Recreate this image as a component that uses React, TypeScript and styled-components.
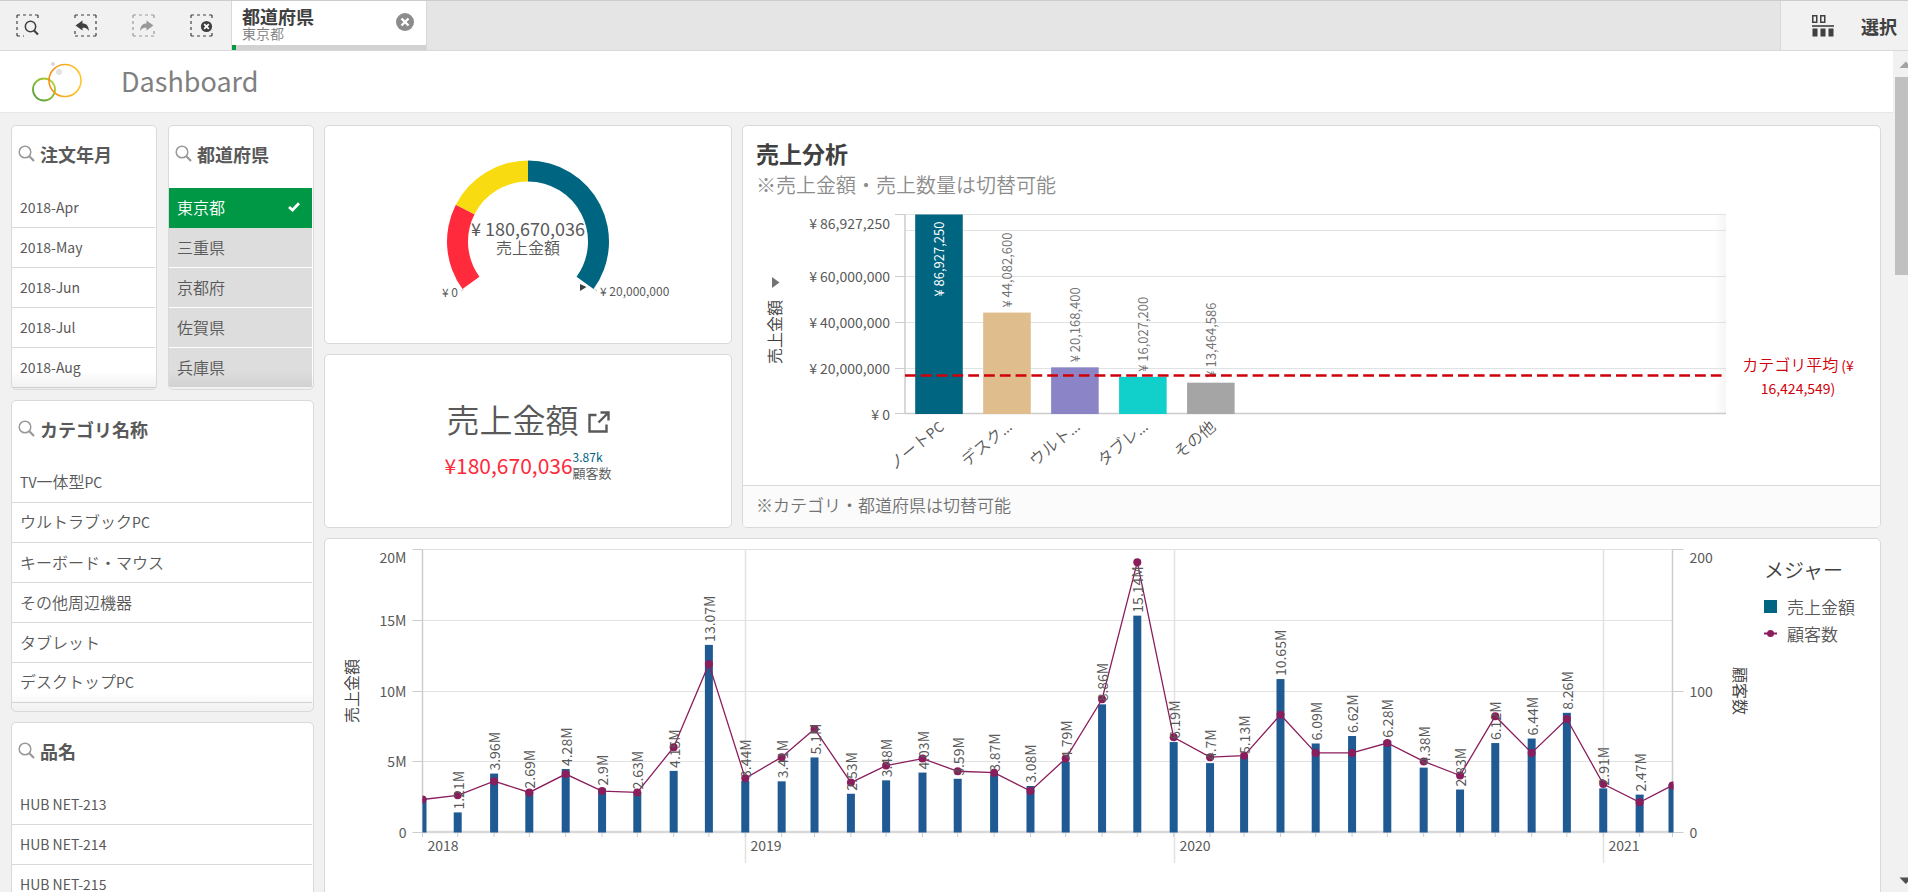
import React, { useLayoutEffect, useRef, useState } from "react";
import styled, { createGlobalStyle, css } from "styled-components";

/* ---------- theme values ---------- */

const color = {
  page: "#f1f1f1",
  bar: "#e5e5e5",
  border: "#d9d9d9",
  text: "#595959",
  strong: "#404040",
  muted: "#808080",
  teal: "#006580",
  red: "#ff2a3b",
  yellow: "#f8db10",
  green: "#009845",
  blue: "#205a92",
  plum: "#8a1e5c",
  ref: "#d0000a",
};

/* Japanese text is set one step lighter than Latin text. */
const weight = { japanese: 350, latin: 400, bold: 700 };

const GlobalStyle = createGlobalStyle`
  *, *::before, *::after { box-sizing: border-box; }
  body {
    margin: 0;
    background: ${color.page};
    color: ${color.text};
    font-family: "Noto Sans CJK JP", sans-serif;
    font-size: 16px;
    font-weight: ${weight.japanese};
  }
  button { font: inherit; color: inherit; background: none; border: 0; padding: 0; cursor: pointer; }
  svg { display: block; }
  h1, h2, p, ul { margin: 0; padding: 0; }
`;

/* ---------- mixed Japanese / Latin text ---------- */

const Latin = styled.span<{ $size: number }>`
  font-size: ${(p) => p.$size}px;
  font-weight: ${weight.latin};
`;

const splitScripts = (text: string) => text.match(/[\x00-\xff]+|[^\x00-\xff]+/g) ?? [];
const isLatin = (part: string) => /^[\x00-\xff]/.test(part);

function Mixed({ text, latin }: { text: string; latin: number }) {
  return (
    <span>
      {splitScripts(text).map((part, i) =>
        isLatin(part) ? (
          <Latin key={i} $size={latin}>
            {part}
          </Latin>
        ) : (
          part
        )
      )}
    </span>
  );
}

function MixedTspans({ text, latin }: { text: string; latin: number }) {
  return (
    <>
      {splitScripts(text).map((part, i) =>
        isLatin(part) ? (
          <tspan key={i} fontSize={latin} fontWeight={weight.latin}>
            {part}
          </tspan>
        ) : (
          <tspan key={i}>{part}</tspan>
        )
      )}
    </>
  );
}

/* ---------- selection bar ---------- */

const Page = styled.div`
  display: flex;
  flex-direction: column;
  height: 100vh;
  overflow: hidden;
`;

const SelectionBar = styled.nav`
  display: flex;
  flex: none;
  height: 51px;
  background: ${color.bar};
  border-top: 1px solid #ccc;
  border-bottom: 1px solid ${color.border};
`;

const ToolGroup = styled.div`
  display: flex;
  width: 232px;
  background: ${color.page};
  border-right: 1px solid ${color.border};
`;

const ToolButton = styled.button`
  display: flex;
  align-items: center;
  justify-content: center;
  flex: 1;
  height: 49px;
  padding-right: 1px;
  color: ${color.strong};
  &:disabled {
    color: #999;
    cursor: default;
  }
`;

const SelectionTab = styled.div`
  display: flex;
  flex-direction: column;
  width: 195px;
  background: #fff;
  border-right: 1px solid ${color.border};
`;

const TabBody = styled.div`
  display: flex;
  justify-content: space-between;
  flex: 1;
  padding: 5px 12px 0 10px;
`;

const TabTitle = styled.div`
  font-size: 18px;
  font-weight: ${weight.bold};
  line-height: 20px;
  color: ${color.strong};
`;

const TabValue = styled.div`
  font-size: 14px;
  line-height: 14px;
  color: ${color.muted};
`;

const TabClear = styled.button`
  align-self: flex-start;
  padding-top: 7px;
`;

const TabState = styled.div`
  height: 5px;
  background: linear-gradient(to right, ${color.green} 4px, #d2d2d2 4px);
`;

const SelectionTools = styled.div`
  display: flex;
  align-items: center;
  margin-left: auto;
  background: ${color.page};
  border-left: 1px solid ${color.border};
  padding: 0 11px 0 31px;
`;

const SelectionsButton = styled.button`
  display: flex;
  align-items: center;
  gap: 27px;
  font-size: 18px;
  font-weight: ${weight.bold};
  color: ${color.strong};
`;

const DASHED_BOX = "M1 1H22M1 22H22M1 1V22M22 1V22";

function SmartSearchIcon() {
  return (
    <svg width="24" height="24" viewBox="0 0 24 24" fill="none" stroke="currentColor">
      <path d="M1 1H22M1 22H8M1 1V22M22 1V7" strokeDasharray="3 3" strokeWidth="1.2" />
      <circle cx="14.5" cy="12.5" r="5.2" strokeWidth="1.5" />
      <path d="M18 16.5L22 20.5" strokeWidth="2.2" />
    </svg>
  );
}

function StepIcon({ forward }: { forward?: boolean }) {
  return (
    <svg width="24" height="24" viewBox="0 0 24 24" fill="none" stroke="currentColor">
      <g transform={forward ? "matrix(-1 0 0 1 23 0)" : undefined}>
        <path d="M1 1H22M1 22H22M1 1V5M1 17V22M22 1V22" strokeDasharray="3 3" strokeWidth="1.2" />
        <path
          d="M1.5 11.5L8.5 6.5V9.5C12.500 9.500 14.800 12 14.800 17C13 14.200 11.500 13.700 8.500 13.700V16.500Z"
          fill="currentColor"
          stroke="none"
        />
      </g>
    </svg>
  );
}

function ClearAllIcon() {
  return (
    <svg width="24" height="24" viewBox="0 0 24 24" fill="none" stroke="currentColor">
      <path d="M1 1H22M1 22H22M1 1V22M22 1V7M22 19V22" strokeDasharray="3 3" strokeWidth="1.2" />
      <circle cx="16.500" cy="12.500" r="5.600" fill="currentColor" stroke="none" />
      <path d="M14.200 10.200L18.800 14.800M18.800 10.200L14.200 14.800" stroke="#fff" strokeWidth="1.700" />
    </svg>
  );
}

function CloseIcon() {
  return (
    <svg width="18" height="18" viewBox="0 0 18 18">
      <circle cx="9" cy="9" r="9" fill="#8c8c8c" />
      <path d="M5.500 5.500L12.500 12.500M12.500 5.500L5.500 12.500" stroke="#fff" strokeWidth="2.400" />
    </svg>
  );
}

function SelectionsIcon() {
  return (
    <svg width="22" height="22" viewBox="0 0 22 22" fill="none" stroke={color.strong}>
      <path d="M0.750 0.750H4.750V7.250H0.750ZM8.750 0.750H12.750V7.250H8.750Z" strokeWidth="1.500" />
      <path d="M0 11H22" strokeWidth="1.600" />
      <path
        d="M0.500 13.500H5.500V21.500H0.500ZM8.500 13.500H13.500V21.500H8.500ZM16.500 13.500H21.500V21.500H16.500Z"
        fill={color.strong}
        stroke="none"
      />
    </svg>
  );
}

/* ---------- sheet header ---------- */

const Body = styled.div`
  display: flex;
  flex: 1;
  min-height: 0;
`;

const SheetArea = styled.div`
  flex: 1;
  min-width: 0;
  overflow: hidden;
`;

const SheetHeader = styled.header`
  display: flex;
  align-items: center;
  gap: 37px;
  height: 62px;
  padding-left: 30px;
  background: #fff;
  border-bottom: 1px solid #e6e6e6;
`;

const SheetTitle = styled.h1`
  padding-bottom: 2px;
  font-size: 27px;
  font-weight: ${weight.latin};
  line-height: 40px;
  color: #808080;
`;

function Logo() {
  return (
    <svg width="54" height="44" viewBox="0 0 54 44" fill="none">
      <defs>
        <linearGradient id="orange" x1="0" y1="0" x2="1" y2="0">
          <stop offset="0" stopColor="#f39019" />
          <stop offset="1" stopColor="#ffc629" />
        </linearGradient>
        <linearGradient id="lime" x1="0" y1="1" x2="1" y2="0">
          <stop offset="0" stopColor="#4b9a3a" />
          <stop offset="1" stopColor="#c3d62e" />
        </linearGradient>
      </defs>
      <circle cx="23" cy="4" r="2" fill="#d9d9d9" />
      <circle cx="29" cy="12" r="3" fill="#e2e2e2" />
      <circle cx="14" cy="29.500" r="11" stroke="url(#lime)" strokeWidth="1.800" />
      <circle cx="35" cy="20.500" r="16" stroke="url(#orange)" strokeWidth="1.600" />
    </svg>
  );
}

/* ---------- scroll bar ---------- */

const ScrollTrack = styled.div`
  display: flex;
  flex-direction: column;
  flex: none;
  width: 15px;
  padding-left: 2px;
  overflow: hidden;
`;

const ScrollThumb = styled.div`
  height: 198px;
  margin-bottom: auto;
  background: #c0c0c0;
`;

function ScrollArrow({ down }: { down?: boolean }) {
  return (
    <svg width="17" height="26" viewBox="0 0 17 26">
      <path d={down ? "M4.500 11.500H17L10.800 18Z" : "M4.500 17H17L10.800 10.500Z"} fill={down ? "#505050" : "#a3a3a3"} />
    </svg>
  );
}

/* ---------- cards ---------- */

const Sheet = styled.main`
  display: grid;
  grid-template-columns: 303fr 1557fr;
  gap: 10px;
  padding: 12px 12px 0 11px;
`;

const Column = styled.div`
  display: flex;
  flex-direction: column;
  gap: 10px;
  min-width: 0;
`;

const FilterPair = styled.div`
  display: grid;
  grid-template-columns: 1fr 1fr;
  gap: 11px;
`;

const TopRow = styled.div`
  display: grid;
  grid-template-columns: 408fr 1139fr;
  gap: 10px;
`;

const Card = styled.section`
  position: relative;
  display: flex;
  flex-direction: column;
  min-width: 0;
  background: #fff;
  border: 1px solid ${color.border};
  border-radius: 5px;
  overflow: hidden;
`;

/* ---------- filter panes ---------- */

const FilterCard = styled(Card)<{ $height: number }>`
  height: ${(p) => p.$height}px;
  &::after {
    content: "";
    position: absolute;
    inset: auto 0 0 0;
    height: 18px;
    background: linear-gradient(to bottom, transparent, rgba(0, 0, 0, 0.06));
    pointer-events: none;
  }
`;

const FilterHeader = styled.div`
  display: flex;
  align-items: center;
  gap: 5px;
  flex: none;
  height: 62px;
  padding: 0 6px 7px;
`;

const FilterTitle = styled.h2`
  font-size: 18px;
  font-weight: ${weight.bold};
  line-height: 24px;
`;

const FilterList = styled.ul`
  padding-right: 1px;
  list-style: none;
`;

type RowState = "selected" | "excluded" | "optional";

const rowLook = {
  selected: css`
    background: ${color.green};
    border-color: ${color.green};
    color: #fff;
  `,
  excluded: css`
    background: #ddd;
    border-color: #fff;
  `,
  optional: css`
    border-color: ${color.border};
  `,
};

const FilterRow = styled.button<{ $state: RowState }>`
  display: flex;
  align-items: center;
  justify-content: space-between;
  width: 100%;
  height: 40px;
  padding: 0 12px 2px 8px;
  border-bottom: 1px solid;
  font-size: 16px;
  line-height: 24px;
  text-align: left;
  ${(p) => rowLook[p.$state]}
`;

function SearchIcon() {
  return (
    <svg width="17" height="17" viewBox="0 0 17 17" fill="none" stroke="#999">
      <circle cx="7" cy="7" r="5.800" strokeWidth="1.500" />
      <path d="M11.300 11.300L16 16" strokeWidth="2.200" />
    </svg>
  );
}

function CheckIcon() {
  return (
    <svg width="12" height="10" viewBox="0 0 12 10" fill="none" stroke="#fff" strokeWidth="2.800">
      <path d="M1 5L4.500 8L11 1.200" />
    </svg>
  );
}

type FilterItem = { text: string; state?: RowState };

function FilterPane({ title, items, height }: { title: string; items: FilterItem[]; height: number }) {
  return (
    <FilterCard $height={height}>
      <FilterHeader>
        <SearchIcon />
        <FilterTitle>{title}</FilterTitle>
      </FilterHeader>
      <FilterList>
        {items.map(({ text, state = "optional" }) => (
          <li key={text}>
            <FilterRow $state={state} aria-pressed={state === "selected"}>
              <Mixed text={text} latin={14} />
              {state === "selected" && <CheckIcon />}
            </FilterRow>
          </li>
        ))}
      </FilterList>
    </FilterCard>
  );
}

/* ---------- chart text ---------- */

const ChartText = styled.text<{ $japanese?: boolean }>`
  font-family: "Noto Sans CJK JP", sans-serif;
  font-weight: ${(p) => (p.$japanese ? weight.japanese : weight.latin)};
`;

/* ---------- gauge ---------- */

const GaugeCard = styled(Card)`
  align-items: center;
  height: 219px;
`;

const GAUGE = { cx: 150, cy: 115.5, outer: 81, inner: 60 };

function polar(radius: number, degrees: number) {
  const a = (degrees * Math.PI) / 180;
  return `${GAUGE.cx + radius * Math.sin(a)} ${GAUGE.cy - radius * Math.cos(a)}`;
}

function gaugeArc(from: number, to: number) {
  const { outer, inner } = GAUGE;
  return `M${polar(outer, from)}A${outer} ${outer} 0 0 1 ${polar(outer, to)}L${polar(inner, to)}A${inner} ${inner} 0 0 0 ${polar(inner, from)}Z`;
}

function Gauge() {
  return (
    <svg width="300" height="217" viewBox="0 0 300 217" role="img" aria-label="売上金額">
      <path d={gaugeArc(-126, -63)} fill={color.red} />
      <path d={gaugeArc(-63, 0)} fill={color.yellow} />
      <path d={gaugeArc(0, 126)} fill={color.teal} />
      <path d="M83 165L86 163M216 163L219 165" stroke="#ccc" />
      <path d="M202 158L208.500 161L202 165Z" fill={color.strong} />
      <ChartText x="150" y="110" fontSize="18" textAnchor="middle" fill={color.text}>
        ¥ 180,670,036
      </ChartText>
      <ChartText $japanese x="150" y="128" fontSize="16" textAnchor="middle" fill={color.text}>
        売上金額
      </ChartText>
      <ChartText x="80" y="171" fontSize="12" textAnchor="end" fill={color.text}>
        ¥ 0
      </ChartText>
      <ChartText x="222" y="170" fontSize="12" fill={color.text}>
        ¥ 20,000,000
      </ChartText>
    </svg>
  );
}

/* ---------- KPI ---------- */

const KpiCard = styled(Card)`
  align-items: center;
  justify-content: center;
  height: 174px;
  padding-bottom: 4px;
`;

const KpiTitle = styled.div`
  display: flex;
  align-items: center;
  gap: 9px;
  font-size: 33px;
  line-height: 44px;
`;

const KpiOpen = styled.button`
  padding-top: 6px;
`;

const KpiValues = styled.div`
  display: flex;
  align-items: center;
  padding-top: 8px;
`;

const KpiMain = styled.div`
  font-size: 21px;
  font-weight: ${weight.latin};
  line-height: 32px;
  color: ${color.red};
`;

const KpiValue = styled.div`
  font-size: 12px;
  font-weight: ${weight.latin};
  line-height: 16px;
  color: ${color.teal};
`;

const KpiLabel = styled.div`
  font-size: 13px;
  line-height: 16px;
`;

function OpenIcon() {
  return (
    <svg width="22" height="22" viewBox="0 0 22 22" fill="none" stroke={color.text} strokeWidth="2.400">
      <path d="M8.500 4H1.500V20.500H18.500V13.500" />
      <path d="M12.500 1.500H20.500V9.500M20.500 1.500L10.500 11.500" />
    </svg>
  );
}

/* ---------- charts ---------- */

function useWidth<T extends HTMLElement>() {
  const ref = useRef<T>(null);
  const [width, setWidth] = useState(0);
  useLayoutEffect(() => {
    const node = ref.current;
    if (!node) return;
    const update = () => setWidth(node.clientWidth);
    update();
    const observer = new ResizeObserver(update);
    observer.observe(node);
    return () => observer.disconnect();
  }, []);
  return [ref, width] as const;
}

/* Centre of the device pixel nearest to a value, for crisp one-pixel lines. */
const crisp = (v: number) => Math.round(v - 0.01) + 0.5;

const ChartHost = styled.div<{ $height: number }>`
  flex: 1;
  min-width: 0;
  height: ${(p) => p.$height}px;
  overflow: hidden;
`;

const ChartTitle = styled.h2`
  padding: 13px 13px 0;
  font-size: 23px;
  font-weight: ${weight.bold};
  line-height: 28px;
  color: ${color.strong};
`;

const ChartSubtitle = styled.p`
  padding: 0 13px;
  font-size: 20px;
  line-height: 36px;
  color: #8c8c8c;
`;

const ChartFootnote = styled.p`
  padding: 0 13px 4px;
  border-top: 1px solid ${color.border};
  background: #fbfbfb;
  font-size: 17px;
  line-height: 37px;
  color: #737373;
`;

const categories = [
  { name: "ノートPC", value: 86927250, label: "¥ 86,927,250", fill: color.teal, inside: true },
  { name: "デスク...", value: 44082600, label: "¥ 44,082,600", fill: "#dfbd8d" },
  { name: "ウルト...", value: 20168400, label: "¥ 20,168,400", fill: "#8b84c6" },
  { name: "タブレ...", value: 16027200, label: "¥ 16,027,200", fill: "#11cfca" },
  { name: "その他", value: 13464586, label: "¥ 13,464,586", fill: "#a5a5a5" },
];

function CategoryChart() {
  const [ref, width] = useWidth<HTMLDivElement>();
  const top = 11.5;
  const base = 210.5;
  const left = 162;
  const right = width - 154;
  const max = 86927250;
  const y = (v: number) => base - (v / max) * (base - top);
  const pitch = (right - left) / 12.08;
  const barWidth = pitch * 0.7;
  const average = Math.floor(y(16424549)) + 0.5;
  return (
    <ChartHost ref={ref} $height={282}>
      {width > 0 && (
        <svg width={width} height="282" role="img" aria-label="売上分析">
          <defs>
            <linearGradient id="edge">
              <stop offset="0" stopColor="#000" stopOpacity="0" />
              <stop offset="1" stopColor="#000" stopOpacity="0.04" />
            </linearGradient>
          </defs>
          <rect x={right - 12} y={top} width="12" height={base - top} fill="url(#edge)" />
          {[max, 80e6, 60e6, 40e6, 20e6].map((v) => (
            <path key={v} d={`M${left} ${crisp(y(v))}H${right}`} stroke="#e2e2e2" />
          ))}
          {[
            { v: max, label: "¥ 86,927,250" },
            { v: 60e6, label: "¥ 60,000,000" },
            { v: 40e6, label: "¥ 40,000,000" },
            { v: 20e6, label: "¥ 20,000,000" },
            { v: 0, label: "¥ 0" },
          ].map(({ v, label }) => (
            <g key={label}>
              <path d={`M${left - 10} ${crisp(y(v))}H${left}`} stroke="#ccc" />
              <ChartText x={left - 15} y={y(v) + (v === max ? 14 : 6)} fontSize="14" textAnchor="end" fill={color.text}>
                {label}
              </ChartText>
            </g>
          ))}
          <path d={`M${left} ${top}V${base}`} stroke="#ccc" strokeWidth="1.500" />
          <path d={`M${left} ${base}H${right}`} stroke="#ccc" strokeWidth="1.500" />
          {categories.map((c, i) => {
            const x = left + pitch * i + pitch * 0.15;
            const cx = x + barWidth / 2;
            return (
              <g key={c.name}>
                <rect x={x} y={y(c.value)} width={barWidth} height={base + 0.5 - y(c.value)} fill={c.fill} />
                <ChartText
                  transform={`translate(${cx + 5.5} ${c.inside ? y(c.value) + 7 : y(c.value) - 5}) rotate(-90)`}
                  fontSize="13"
                  textAnchor={c.inside ? "end" : "start"}
                  fill={c.inside ? "#fff" : "#737373"}
                >
                  {c.label}
                </ChartText>
                <ChartText
                  $japanese
                  transform={`translate(${cx + 6} ${base + 15}) rotate(-40)`}
                  fontSize="16"
                  textAnchor="end"
                  fill={color.text}
                >
                  <MixedTspans text={c.name} latin={14} />
                </ChartText>
              </g>
            );
          })}
          <path d={`M${left} ${average}H${right}`} stroke={color.ref} strokeWidth="2.600" strokeDasharray="10.800 5" />
          <ChartText $japanese x={width - 82} y={average - 5} fontSize="16" textAnchor="middle" fill={color.ref}>
            <MixedTspans text="カテゴリ平均 (¥" latin={14} />
          </ChartText>
          <ChartText x={width - 82} y={average + 18} fontSize="14" textAnchor="middle" fill={color.ref}>
            16,424,549)
          </ChartText>
          <path d="M29 74L36.500 79.500L29 85Z" fill="#737373" />
          <ChartText $japanese transform="translate(38 129) rotate(-90)" fontSize="16" textAnchor="middle" fill={color.strong}>
            売上金額
          </ChartText>
        </svg>
      )}
    </ChartHost>
  );
}

/* Monthly sales in millions, April 2018 to March 2021. */
const sales = [
  2.24, 1.21, 3.96, 2.69, 4.28, 2.9, 2.63, 4.15, 13.07, 3.44, 3.41, 5.1, 2.53, 3.48, 4.03, 3.59, 3.87, 3.08, 4.79, 8.86,
  15.14, 6.19, 4.7, 5.13, 10.65, 6.09, 6.62, 6.28, 4.38, 2.83, 6.12, 6.44, 8.26, 2.91, 2.47, 3.2,
];

const customers = [
  23, 26, 36, 28, 41, 29, 28, 60, 119, 38, 53, 73, 35, 47, 52, 43, 42, 29, 52, 94, 191, 67, 53, 54, 83, 56, 56, 63, 50,
  40, 82, 56, 80, 34, 21, 33,
];

const monthStart = (i: number) => Date.UTC(2018, 3 + i, 1);
const FIRST = monthStart(0);
const LAST = monthStart(sales.length - 1);

function MonthlyChart() {
  const [ref, width] = useWidth<HTMLDivElement>();
  const top = 10.5;
  const base = 293;
  const left = 97.5;
  const right = width - 81.5;
  const x = (time: number) => left + ((time - FIRST) / (LAST - FIRST)) * (right - left);
  const y = (millions: number) => base - (millions / 20) * (base - top);
  const barTop = (millions: number) => y(millions) - 2.5;
  const years = [2019, 2020, 2021].map((year) => ({ year, at: crisp(x(Date.UTC(year, 0, 1))) }));
  const points = customers.map((c, i) => [x(monthStart(i)), base - (c / 200) * (base - top)]);
  return (
    <ChartHost ref={ref} $height={360}>
      {width > 0 && (
        <svg width={width} height="360" role="img" aria-label="売上金額と顧客数">
          <defs>
            <clipPath id="plot">
              <rect x={left} y="0" width={right - left + 1} height="300" />
            </clipPath>
          </defs>
          {[20, 15, 10, 5].map((v) => (
            <path key={v} d={`M${left} ${crisp(y(v))}H${right}`} stroke="#e2e2e2" />
          ))}
          {years.map(({ year, at }) => (
            <g key={year}>
              <path d={`M${at} ${top}V324`} stroke="#e2e2e2" strokeWidth="1.500" />
              <ChartText x={at + 5} y="312" fontSize="14" fill={color.text}>
                {year}
              </ChartText>
            </g>
          ))}
          <ChartText x={left + 5} y="312" fontSize="14" fill={color.text}>
            2018
          </ChartText>
          <path d={`M${left} ${base}H${right}`} stroke="#d9d9d9" strokeWidth="2.500" />
          <path d={`M${left} ${top}V${base}M${right} ${top}V${base}`} stroke="#ccc" strokeWidth="1.500" />
          {sales.map((_, i) => (
            <path key={i} d={`M${x(monthStart(i))} ${base + 1}V${base + 5}`} stroke="#ccc" />
          ))}
          {[20, 15, 10, 5, 0].map((v) => (
            <g key={v}>
              <path d={`M${left - 10} ${crisp(y(v))}H${left}`} stroke="#ccc" />
              <ChartText x={left - 16} y={y(v) + (v === 20 ? 13 : 6)} fontSize="14" textAnchor="end" fill={color.text}>
                {v ? `${v}M` : "0"}
              </ChartText>
            </g>
          ))}
          {[20, 10, 0].map((v) => (
            <g key={v}>
              <path d={`M${right} ${crisp(y(v))}H${right + 11}`} stroke="#ccc" />
              <ChartText x={right + 17} y={y(v) + (v === 20 ? 13 : 6)} fontSize="14" fill={color.text}>
                {v * 10}
              </ChartText>
            </g>
          ))}
          <g clipPath="url(#plot)">
            {sales.map((v, i) => (
              <rect key={i} x={x(monthStart(i)) - 4} y={barTop(v)} width="8" height={base + 0.5 - barTop(v)} fill={color.blue} />
            ))}
            <polyline points={points.map((p) => p.join(",")).join(" ")} fill="none" stroke={color.plum} strokeWidth="1.300" />
            {points.map(([px, py], i) => (
              <circle key={i} cx={px} cy={py} r="4" fill={color.plum} />
            ))}
          </g>
          {sales.slice(1, -1).map((v, i) => (
            <ChartText
              key={i}
              transform={`translate(${x(monthStart(i + 1)) + 6} ${barTop(v) - 3}) rotate(-90)`}
              fontSize="14"
              fill={color.text}
            >
              {v}M
            </ChartText>
          ))}
          <ChartText $japanese transform="translate(33 152) rotate(-90)" fontSize="16" textAnchor="middle" fill={color.strong}>
            売上金額
          </ChartText>
          <ChartText
            $japanese
            transform={`translate(${width - 20} 152) rotate(90)`}
            fontSize="16"
            textAnchor="middle"
            fill={color.strong}
          >
            顧客数
          </ChartText>
        </svg>
      )}
    </ChartHost>
  );
}

const MonthlyCard = styled(Card)`
  flex-direction: row;
  height: 420px;
`;

const Legend = styled.aside`
  flex: none;
  width: 126px;
  padding: 16px 0 0 10px;
`;

const LegendTitle = styled.h2`
  padding-bottom: 8px;
  font-size: 20px;
  font-weight: ${weight.japanese};
  line-height: 30px;
  color: ${color.strong};
`;

const LegendItem = styled.div`
  display: flex;
  align-items: center;
  gap: 10px;
  font-size: 17px;
  line-height: 27px;
`;

/* ---------- data ---------- */

const months: FilterItem[] = ["2018-Apr", "2018-May", "2018-Jun", "2018-Jul", "2018-Aug"].map((text) => ({ text }));

const prefectures: FilterItem[] = [
  { text: "東京都", state: "selected" },
  { text: "三重県", state: "excluded" },
  { text: "京都府", state: "excluded" },
  { text: "佐賀県", state: "excluded" },
  { text: "兵庫県", state: "excluded" },
];

const categoryNames: FilterItem[] = [
  "TV一体型PC",
  "ウルトラブックPC",
  "キーボード・マウス",
  "その他周辺機器",
  "タブレット",
  "デスクトップPC",
].map((text) => ({ text }));

const products: FilterItem[] = ["HUB NET-213", "HUB NET-214", "HUB NET-215"].map((text) => ({ text }));

export default function App() {
  return (
    <Page>
      <GlobalStyle />
      <SelectionBar>
        <ToolGroup>
          <ToolButton aria-label="スマート検索">
            <SmartSearchIcon />
          </ToolButton>
          <ToolButton aria-label="戻る">
            <StepIcon />
          </ToolButton>
          <ToolButton aria-label="進む" disabled>
            <StepIcon forward />
          </ToolButton>
          <ToolButton aria-label="すべての選択をクリア">
            <ClearAllIcon />
          </ToolButton>
        </ToolGroup>
        <SelectionTab>
          <TabBody>
            <div>
              <TabTitle>都道府県</TabTitle>
              <TabValue>東京都</TabValue>
            </div>
            <TabClear aria-label="選択をクリア">
              <CloseIcon />
            </TabClear>
          </TabBody>
          <TabState />
        </SelectionTab>
        <SelectionTools>
          <SelectionsButton>
            <SelectionsIcon />
            選択
          </SelectionsButton>
        </SelectionTools>
      </SelectionBar>

      <Body>
        <SheetArea>
          <SheetHeader>
            <Logo />
            <SheetTitle>Dashboard</SheetTitle>
          </SheetHeader>
          <Sheet>
            <Column>
              <FilterPair>
                <FilterPane title="注文年月" items={months} height={265} />
                <FilterPane title="都道府県" items={prefectures} height={265} />
              </FilterPair>
              <FilterPane title="カテゴリ名称" items={categoryNames} height={312} />
              <FilterPane title="品名" items={products} height={312} />
            </Column>
            <Column>
              <TopRow>
                <Column>
                  <GaugeCard>
                    <Gauge />
                  </GaugeCard>
                  <KpiCard>
                    <KpiTitle>
                      売上金額
                      <KpiOpen aria-label="シートを開く">
                        <OpenIcon />
                      </KpiOpen>
                    </KpiTitle>
                    <KpiValues>
                      <KpiMain>¥180,670,036</KpiMain>
                      <div>
                        <KpiValue>3.87k</KpiValue>
                        <KpiLabel>顧客数</KpiLabel>
                      </div>
                    </KpiValues>
                  </KpiCard>
                </Column>
                <Card>
                  <ChartTitle>売上分析</ChartTitle>
                  <ChartSubtitle>※売上金額・売上数量は切替可能</ChartSubtitle>
                  <CategoryChart />
                  <ChartFootnote>※カテゴリ・都道府県は切替可能</ChartFootnote>
                </Card>
              </TopRow>
              <MonthlyCard>
                <MonthlyChart />
                <Legend>
                  <LegendTitle>メジャー</LegendTitle>
                  <LegendItem>
                    <svg width="13" height="13">
                      <rect width="13" height="13" fill={color.teal} />
                    </svg>
                    売上金額
                  </LegendItem>
                  <LegendItem>
                    <svg width="13" height="13">
                      <path d="M0 6.500H13" stroke={color.plum} strokeWidth="2" />
                      <circle cx="6.500" cy="6.500" r="3.500" fill={color.plum} />
                    </svg>
                    顧客数
                  </LegendItem>
                </Legend>
              </MonthlyCard>
            </Column>
          </Sheet>
        </SheetArea>
        <ScrollTrack aria-hidden="true">
          <ScrollArrow />
          <ScrollThumb />
          <ScrollArrow down />
        </ScrollTrack>
      </Body>
    </Page>
  );
}
